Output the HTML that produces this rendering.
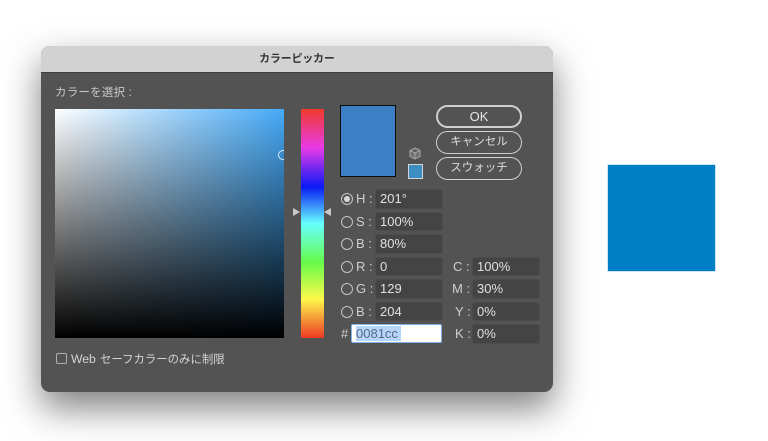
<!DOCTYPE html>
<html lang="ja">
<head>
<meta charset="utf-8">
<title>カラーピッカー</title>
<style>
html,body{margin:0;padding:0;background:#fff;}
body{width:768px;height:441px;position:relative;overflow:hidden;font-family:"Liberation Sans","Noto Sans CJK JP",sans-serif;}
#wrap{position:absolute;left:0;top:0;width:768px;height:441px;filter:blur(.35px);}
.a{position:absolute;box-sizing:border-box;}
#dlg{left:41px;top:46px;width:512px;height:346px;background:#535353;border-radius:9px;box-shadow:0 16px 36px rgba(0,0,0,.5);overflow:hidden;}
#tb{left:0;top:0;width:512px;height:27px;background:#d2d2d2;border-bottom:1px solid #3e3e3e;}
#ttl{left:0;top:5px;width:512px;text-align:center;font-size:10.8px;line-height:16px;font-weight:bold;color:#333;}
.t{position:absolute;white-space:nowrap;color:#d6d6d6;font-size:12px;line-height:16px;}
.f{position:absolute;box-sizing:border-box;width:66px;height:17.6px;background:#444;border-radius:2px;box-shadow:0 0 0 1px #4c4c4c;color:#e0e0e0;font-size:13px;line-height:18px;padding-left:4px;white-space:nowrap;}
.l{position:absolute;color:#cfcfcf;font-size:13px;line-height:18px;white-space:nowrap;}
.r{position:absolute;box-sizing:border-box;width:12px;height:12px;border:1px solid #c4c4c4;border-radius:50%;}
.b{position:absolute;box-sizing:border-box;left:436px;width:86px;height:23px;border:1.5px solid #d0d0d0;border-radius:12px;color:#dcdcdc;text-align:center;font-size:11.5px;line-height:21px;white-space:nowrap;}
</style>
</head>
<body>
<div id="wrap">
<div class="a" id="dlg">
  <div class="a" id="tb"></div>
  <div class="a" id="ttl">カラーピッカー</div>
</div>

<div class="t" style="left:55px;top:85px;font-size:11.5px;color:#c8c8c8;letter-spacing:.2px;">カラーを選択 :</div>

<div class="a" style="left:55px;top:109px;width:229px;height:229px;background:linear-gradient(to bottom,rgba(0,0,0,0),#000),linear-gradient(to right,#fff,#45aaf8);overflow:hidden;">
  <div class="a" style="left:223px;top:41px;width:10px;height:10px;border:1.3px solid #d4ecff;border-radius:50%;"></div>
</div>

<div class="a" style="left:301px;top:109px;width:23px;height:229px;background:linear-gradient(to bottom,#f03a2c 0%,#e83ae8 17%,#0a1af5 34%,#66ffff 50%,#66fb4a 67%,#fdf94a 83%,#ee3a26 100%);"></div>
<svg class="a" style="left:292px;top:207px;" width="40" height="10" viewBox="0 0 40 10"><path d="M1 1 L8 5 L1 9 Z" fill="#c8c8c8"/><path d="M39 1 L32 5 L39 9 Z" fill="#c8c8c8"/></svg>

<div class="a" style="left:340px;top:105px;width:56px;height:72px;background:#3b7fc4;border:1px solid #0c0c0c;"></div>

<svg class="a" style="left:409px;top:147px;" width="12" height="13" viewBox="0 0 12 13"><path d="M6 1 L11 3.5 V9.5 L6 12 L1 9.5 V3.5 Z M1 3.5 L6 6 L11 3.5 M6 6 V12" fill="#6f6f6f" stroke="#a8a8a8" stroke-width="1"/></svg>
<div class="a" style="left:408px;top:164px;width:15px;height:15px;background:#3b8ec2;border:1px solid #d4d4d4;"></div>

<div class="b" style="top:105px;border-width:2px;font-size:13px;line-height:19px;color:#e4e4e4;">OK</div>
<div class="b" style="top:131px;">キャンセル</div>
<div class="b" style="top:157px;">スウォッチ</div>

<div class="r" style="left:341px;top:193px;background:#555;"></div>
<div class="a" style="left:344px;top:196px;width:6px;height:6px;border-radius:50%;background:#d8d8d8;"></div>
<div class="r" style="left:341px;top:216px;"></div>
<div class="r" style="left:341px;top:238px;"></div>
<div class="r" style="left:341px;top:261px;"></div>
<div class="r" style="left:341px;top:283px;"></div>
<div class="r" style="left:341px;top:306px;"></div>

<div class="l" style="left:356px;top:190px;">H :</div>
<div class="l" style="left:356px;top:212.6px;">S :</div>
<div class="l" style="left:356px;top:235px;">B :</div>
<div class="l" style="left:356px;top:257.6px;">R :</div>
<div class="l" style="left:356px;top:280px;">G :</div>
<div class="l" style="left:356px;top:302.6px;">B :</div>
<div class="l" style="left:341px;top:325px;">#</div>

<div class="f" style="left:376px;top:190px;">201°</div>
<div class="f" style="left:376px;top:212.6px;">100%</div>
<div class="f" style="left:376px;top:235px;">80%</div>
<div class="f" style="left:376px;top:257.6px;">0</div>
<div class="f" style="left:376px;top:280px;">129</div>
<div class="f" style="left:376px;top:302.6px;">204</div>

<div class="a" style="left:351px;top:324px;width:91px;height:19px;background:#fff;border:1px solid #7fb2ea;border-radius:2px;"></div>
<div class="a" style="left:356px;top:326px;width:45px;height:15px;background:#b5d5fb;color:#5a6b80;font-size:13px;line-height:15px;">0081cc</div>

<div class="l" style="left:453px;top:257.6px;">C :</div>
<div class="l" style="left:452px;top:280px;">M :</div>
<div class="l" style="left:455px;top:302.6px;">Y :</div>
<div class="l" style="left:455px;top:325px;">K :</div>

<div class="f" style="left:473px;top:257.6px;">100%</div>
<div class="f" style="left:473px;top:280px;">30%</div>
<div class="f" style="left:473px;top:302.6px;">0%</div>
<div class="f" style="left:473px;top:325px;">0%</div>

<div class="a" style="left:56px;top:353px;width:11px;height:10.5px;border:1px solid #b0b0b0;border-radius:2px;"></div>
<div class="t" style="left:71px;top:350.5px;font-size:11.4px;color:#d4d4d4;"><span style="font-size:12.2px;margin-right:1px;">Web</span> セーフカラーのみに制限</div>

<div class="a" style="left:608px;top:165px;width:107px;height:106px;background:#007fc7;box-shadow:0 0 0 .4px #7cc0ee;"></div>
</div>
</body>
</html>
